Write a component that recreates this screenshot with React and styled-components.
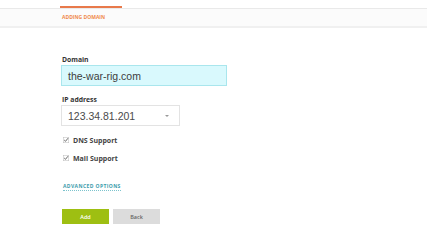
import React from "react";
import styled, { createGlobalStyle } from "styled-components";

const Global = createGlobalStyle`
  html, body { margin: 0; padding: 0; background: #ffffff; }
  body { font-family: "Open Sans", "Liberation Sans", sans-serif; }
  * { box-sizing: border-box; }
`;

const Page = styled.div`
  width: 427px;
  height: 240px;
  overflow: hidden;
  background: #fff;
  padding-top: 8px;
`;

const TabBar = styled.div`
  height: 20px;
  background: #fbfbfb;
  border-top: 1px solid #e9e9e9;
  border-bottom: 2px solid #f0f0f0;
  display: flex;
  padding-left: 60px;
`;

const Tab = styled.div`
  margin-top: -3px;
  border-top: 2px solid #e8794a;
  width: 62px;
  padding-left: 2px;
  display: flex;
  align-items: center;
  font-size: 5px;
  font-weight: 700;
  color: #f08a4b;
  text-transform: uppercase;
`;

const Form = styled.div`
  padding-left: 61px;
  padding-top: 28px;
  display: flex;
  flex-direction: column;
`;

const Label = styled.div`
  font-size: 6.8px;
  font-weight: 700;
  color: #333;
  padding-left: 1px;
  margin-bottom: 1px;
  line-height: 8px;
`;

const TextInput = styled.div`
  width: 166px;
  height: 21px;
  background: #d9f9fd;
  border: 1px solid #a9e6ed;
  font-family: "Liberation Sans", Arial, sans-serif;
  font-size: 10.5px;
  color: #3d3d3d;
  display: flex;
  align-items: center;
  padding-left: 6px;
  margin-bottom: 10px;
`;

const Select = styled.div`
  width: 119px;
  height: 21px;
  background: #fff;
  border: 1px solid #e3e3e3;
  font-family: "Liberation Sans", Arial, sans-serif;
  font-size: 10.5px;
  color: #4a4a4a;
  display: flex;
  align-items: center;
  justify-content: space-between;
  padding: 0 10px 0 6px;
  margin-bottom: 10px;
`;

const Caret = styled.span`
  width: 0;
  height: 0;
  border-left: 2px solid transparent;
  border-right: 2px solid transparent;
  border-top: 2px solid #999;
`;

const CheckRow = styled.label`
  display: flex;
  align-items: center;
  gap: 4px;
  height: 8px;
  padding-left: 2px;
  margin-bottom: 10px;
  font-size: 7px;
  font-weight: 700;
  color: #444;
`;

const Box = styled.span`
  width: 6px;
  height: 6px;
  display: flex;
  align-items: center;
  justify-content: center;
`;

const Advanced = styled.a`
  margin-top: 11px;
  margin-left: 2px;
  align-self: flex-start;
  font-size: 5px;
  font-weight: 700;
  letter-spacing: 0.4px;
  color: #3b9cac;
  text-transform: uppercase;
  border-bottom: 1px dotted #7cc3cd;
  padding-bottom: 1px;
  line-height: 6px;
`;

const Buttons = styled.div`
  display: flex;
  gap: 4px;
  margin-top: 18px;
  padding-left: 1px;
`;

const Button = styled.button`
  width: 47px;
  height: 15px;
  border: none;
  padding: 0;
  font-family: "Open Sans", "Liberation Sans", sans-serif;
  font-size: 5.5px;
  font-weight: 600;
  background: ${(p) => (p.$primary ? "#9ebf12" : "#dcdcdc")};
  color: ${(p) => (p.$primary ? "#ffffff" : "#666")};
`;

const Check = () => (
  <Box>
    <svg width="6" height="6" viewBox="0 0 6 6">
      <rect x="0.25" y="0.25" width="5.5" height="5.5" fill="#fff" stroke="#bbb" strokeWidth="0.5" />
      <path d="M1.2 3 L2.5 4.3 L5 1.2" fill="none" stroke="#444" strokeWidth="0.8" />
    </svg>
  </Box>
);

export default function App() {
  return (
    <>
      <Global />
      <Page>
        <TabBar>
          <Tab>Adding Domain</Tab>
        </TabBar>
        <Form>
          <Label>Domain</Label>
          <TextInput>the-war-rig.com</TextInput>
          <Label>IP address</Label>
          <Select>
            <span>123.34.81.201</span>
            <Caret />
          </Select>
          <CheckRow>
            <Check />
            DNS Support
          </CheckRow>
          <CheckRow>
            <Check />
            Mail Support
          </CheckRow>
          <Advanced>Advanced Options</Advanced>
          <Buttons>
            <Button $primary>Add</Button>
            <Button>Back</Button>
          </Buttons>
        </Form>
      </Page>
    </>
  );
}
